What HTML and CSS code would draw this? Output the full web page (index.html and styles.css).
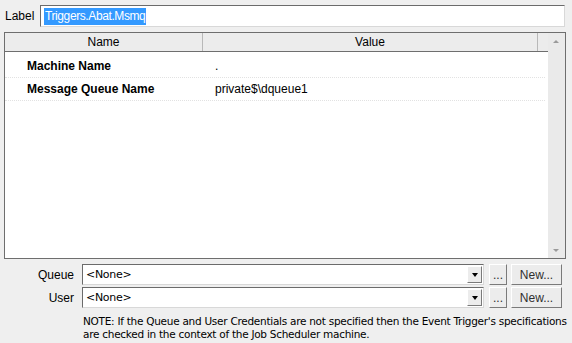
FILE: index.html
```html
<!DOCTYPE html>
<html lang="en">
<head>
  <meta charset="UTF-8">
  <title>Trigger Properties</title>
  <link rel="stylesheet" href="styles.css">
</head>
<body>

  <div class="label-row">
    <span class="label-text">Label</span>
    <div class="textbox"><span class="selected">Triggers.Abat.Msmq</span></div>
  </div>

  <div class="grid">
    <div class="grid-main">
      <div class="grid-header">
        <div class="col-name">Name</div>
        <div class="col-value">Value</div>
        <div class="col-pad"></div>
      </div>
      <div class="grid-row">
        <div class="cell-name">Machine Name</div>
        <div class="cell-value">.</div>
      </div>
      <div class="grid-row">
        <div class="cell-name">Message Queue Name</div>
        <div class="cell-value">private$\dqueue1</div>
      </div>
    </div>
    <div class="scrollbar">
      <span class="arrow up"></span>
      <span class="arrow down"></span>
    </div>
  </div>

  <div class="form">
    <div class="form-row">
      <span class="form-label">Queue</span>
      <div class="combo">
        <span class="combo-text">&lt;None&gt;</span>
        <span class="combo-btn"><span class="tri"></span></span>
      </div>
      <button class="btn btn-dots">...</button>
      <button class="btn btn-new">New...</button>
    </div>
    <div class="form-row">
      <span class="form-label">User</span>
      <div class="combo">
        <span class="combo-text">&lt;None&gt;</span>
        <span class="combo-btn"><span class="tri"></span></span>
      </div>
      <button class="btn btn-dots">...</button>
      <button class="btn btn-new">New...</button>
    </div>
    <p class="note">NOTE: If the Queue and User Credentials are not specified then the Event Trigger's specifications are checked in the context of the Job Scheduler machine.</p>
  </div>

</body>
</html>
```

FILE: styles.css
```css
body {
  margin: 0;
  width: 572px;
  height: 343px;
  overflow: hidden;
  background-color: #efefef;
  font-family: "Liberation Sans", Arial, sans-serif;
  font-size: 12px;
  color: #000;
}

.label-row {
  display: flex;
  align-items: center;
  padding: 5px 7px 0 5px;
  height: 22px;
}

.label-text {
  width: 35px;
}

.textbox {
  flex: 1;
  height: 20px;
  background: #fff;
  border: 1px solid #d8d8d8;
  border-top-color: #6b6b6b;
  border-left-color: #6b6b6b;
  display: flex;
  align-items: center;
  padding-left: 3px;
}

.selected {
  background: #3399ff;
  color: #fff;
  padding: 1px 1px 2px;
  line-height: 14px;
  letter-spacing: -0.4px;
}

.grid {
  display: flex;
  margin: 5px 6px 0 4px;
  height: 225px;
  border: 1px solid #6e6e6e;
  background: #fff;
}

.grid-main {
  flex: 1;
  display: flex;
  flex-direction: column;
}

.grid-header {
  display: flex;
  height: 18px;
  background: #ececec;
  border-bottom: 1px solid #6e6e6e;
  line-height: 18px;
  margin-bottom: 3px;
}

.col-name {
  width: 197px;
  text-align: center;
  border-right: 1px solid #b8b8b8;
}

.col-value {
  width: 334px;
  text-align: center;
  border-right: 1px solid #b8b8b8;
}

.col-pad {
  flex: 1;
}

.grid-row {
  display: flex;
  height: 22px;
  line-height: 22px;
  border-bottom: 1px dotted #e2e2e2;
  margin-right: 3px;
}

.cell-name {
  width: 176px;
  padding-left: 22px;
  font-weight: bold;
}

.cell-value {
  padding-left: 12px;
}

.scrollbar {
  width: 17px;
  background: #eaeaea;
  position: relative;
}

.arrow {
  position: absolute;
  left: 5px;
  width: 0;
  height: 0;
  border-left: 3px solid transparent;
  border-right: 3px solid transparent;
}

.arrow.up {
  top: 7px;
  border-bottom: 3px solid #9a9a9a;
}

.arrow.down {
  bottom: 6px;
  border-top: 3px solid #9a9a9a;
}

.form {
  padding: 3px 0 0 0;
}

.form-row {
  display: flex;
  align-items: center;
  height: 21px;
  margin-top: 2px;
}

.form-label {
  width: 74px;
  text-align: right;
  padding-right: 8px;
}

.combo {
  width: 400px;
  height: 19px;
  background: #fff;
  border: 1px solid #d8d8d8;
  border-top-color: #6b6b6b;
  border-left-color: #6b6b6b;
  display: flex;
  align-items: center;
  font-family: "DejaVu Sans", sans-serif;
  font-size: 11px;
  letter-spacing: -0.3px;
}

.combo-text {
  flex: 1;
  padding-left: 3px;
}

.combo-btn {
  width: 15px;
  height: 17px;
  margin-right: 1px;
  background: #ececec;
  border: 1px solid #fff;
  border-right-color: #7a7a7a;
  border-bottom-color: #7a7a7a;
  box-sizing: border-box;
  display: flex;
  align-items: center;
  justify-content: center;
}

.tri {
  width: 0;
  height: 0;
  border-left: 3px solid transparent;
  border-right: 3px solid transparent;
  border-top: 4px solid #000;
}

.btn {
  height: 21px;
  margin-left: 5px;
  background: #ececec;
  border: 1px solid #fff;
  border-right-color: #7a7a7a;
  border-bottom-color: #7a7a7a;
  font-family: "Liberation Sans", Arial, sans-serif;
  font-size: 12px;
  color: #2f2f2f;
  padding: 0;
}

.btn-dots {
  width: 18px;
}

.btn-new {
  width: 51px;
  margin-left: 4px;
}

.note {
  margin: 7px 2px 0 83px;
  font-family: "DejaVu Sans", sans-serif;
  font-size: 10.5px;
  letter-spacing: -0.27px;
  line-height: 13px;
}
```
